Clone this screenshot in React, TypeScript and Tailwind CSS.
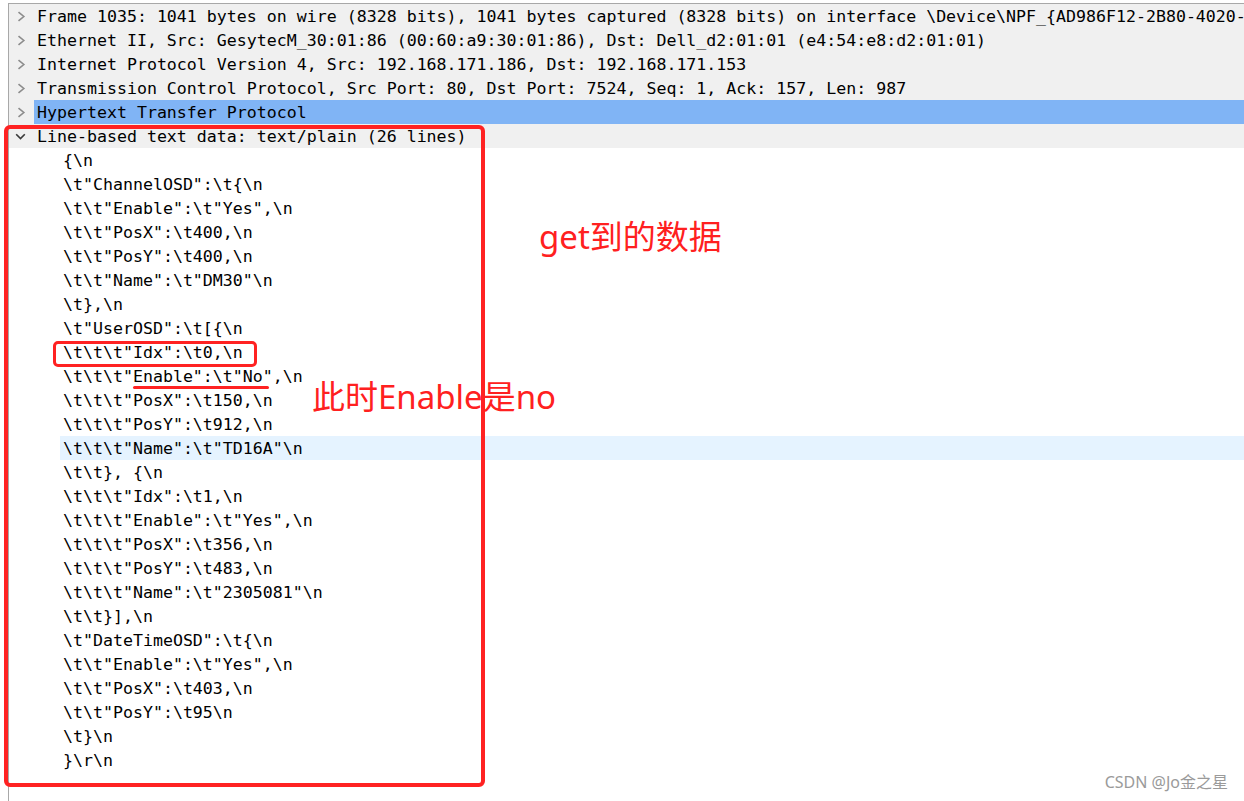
import React from "react";

const mono = { fontFamily: '"DejaVu Sans Mono", "Liberation Mono", monospace' };
const sans = { fontFamily: '"Noto Sans", "Noto Sans CJK SC", sans-serif' };

const headers = [
  String.raw`Frame 1035: 1041 bytes on wire (8328 bits), 1041 bytes captured (8328 bits) on interface \Device\NPF_{AD986F12-2B80-4020-`,
  String.raw`Ethernet II, Src: GesytecM_30:01:86 (00:60:a9:30:01:86), Dst: Dell_d2:01:01 (e4:54:e8:d2:01:01)`,
  String.raw`Internet Protocol Version 4, Src: 192.168.171.186, Dst: 192.168.171.153`,
  String.raw`Transmission Control Protocol, Src Port: 80, Dst Port: 7524, Seq: 1, Ack: 157, Len: 987`,
  String.raw`Hypertext Transfer Protocol`,
];

const lines = [
  String.raw`{\n`,
  String.raw`\t"ChannelOSD":\t{\n`,
  String.raw`\t\t"Enable":\t"Yes",\n`,
  String.raw`\t\t"PosX":\t400,\n`,
  String.raw`\t\t"PosY":\t400,\n`,
  String.raw`\t\t"Name":\t"DM30"\n`,
  String.raw`\t},\n`,
  String.raw`\t"UserOSD":\t[{\n`,
  String.raw`\t\t\t"Idx":\t0,\n`,
  String.raw`\t\t\t"Enable":\t"No",\n`,
  String.raw`\t\t\t"PosX":\t150,\n`,
  String.raw`\t\t\t"PosY":\t912,\n`,
  String.raw`\t\t\t"Name":\t"TD16A"\n`,
  String.raw`\t\t}, {\n`,
  String.raw`\t\t\t"Idx":\t1,\n`,
  String.raw`\t\t\t"Enable":\t"Yes",\n`,
  String.raw`\t\t\t"PosX":\t356,\n`,
  String.raw`\t\t\t"PosY":\t483,\n`,
  String.raw`\t\t\t"Name":\t"2305081"\n`,
  String.raw`\t\t}],\n`,
  String.raw`\t"DateTimeOSD":\t{\n`,
  String.raw`\t\t"Enable":\t"Yes",\n`,
  String.raw`\t\t"PosX":\t403,\n`,
  String.raw`\t\t"PosY":\t95\n`,
  String.raw`\t}\n`,
  String.raw`}\r\n`,
];

function ChevronRight() {
  return (
    <svg width="9" height="11" viewBox="0 0 9 11" className="ml-[8px] shrink-0">
      <path d="M1.5 1.2 L6.8 5.5 L1.5 9.8" fill="none" stroke="#8c8c8c" strokeWidth="1.6" />
    </svg>
  );
}

function ChevronDown() {
  return (
    <svg width="11" height="7" viewBox="0 0 11 7" className="ml-[6px] shrink-0">
      <path d="M1.2 1.2 L5.5 5.6 L9.8 1.2" fill="none" stroke="#3a3a3a" strokeWidth="1.6" />
    </svg>
  );
}

export default function App() {
  return (
    <div className="relative h-[801px] w-[1244px] overflow-hidden bg-white">
      {/* packet details tree */}
      <div className="ml-[8px] mt-[3px] h-[798px] border-l border-t border-[#a8a8a8] text-[16.6px] text-black" style={mono}>
        {headers.map((h, i) => (
          <div key={i} className="flex h-[24px] items-center bg-[#f0f0f0]">
            <div className="flex w-[25px] shrink-0 items-center">
              <ChevronRight />
            </div>
            <div className={`h-[24px] flex-1 whitespace-nowrap pl-[3px] pt-[2px] leading-[22px] ${i === 4 ? "bg-[#80b4f5]" : ""}`}>
              {h}
            </div>
          </div>
        ))}
        <div className="flex h-[24px] items-center bg-[#f0f0f0]">
          <div className="flex w-[25px] shrink-0 items-center">
            <ChevronDown />
          </div>
          <div className="h-[24px] flex-1 whitespace-nowrap pl-[3px] pt-[2px] leading-[22px]">
            Line-based text data: text/plain (26 lines)
          </div>
        </div>
        {lines.map((l, i) => (
          <div key={i} className="flex h-[24px] pl-[51px]">
            <div className={`flex-1 whitespace-pre pl-[3px] pt-[2px] leading-[22px] ${i === 12 ? "bg-[#e5f3ff]" : ""}`}>
              {l}
            </div>
          </div>
        ))}
      </div>

      {/* annotations drawn over the screenshot */}
      <div className="absolute left-[4px] top-[125px] h-[662px] w-[481px] rounded-[6px] border-[4px] border-[#ff2222]" />
      <div className="absolute left-[53px] top-[341px] h-[26px] w-[204px] rounded-[5px] border-[3px] border-[#ff2222]" />
      <div className="absolute left-[133px] top-[386px] h-[3px] w-[136px] rounded-full bg-[#ff2222]" />

      <div className="absolute left-[539px] top-[219px] text-[33px] leading-[36px] text-[#ff2020]" style={sans}>
        get到的数据
      </div>
      <div className="absolute left-[312px] top-[379px] text-[33px] leading-[36px] text-[#ff2020]" style={sans}>
        此时Enable是no
      </div>

      <div className="absolute right-[16px] top-[772px] text-[16px] leading-[20px] text-[#9a9a9a]" style={sans}>
        CSDN @Jo金之星
      </div>
    </div>
  );
}
